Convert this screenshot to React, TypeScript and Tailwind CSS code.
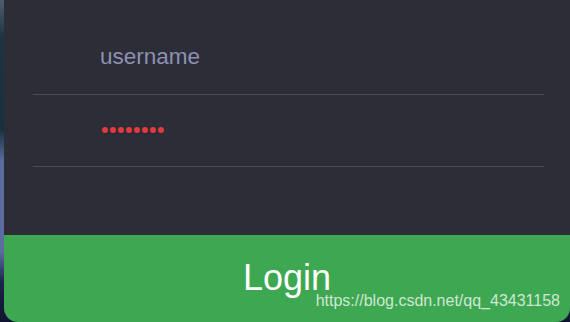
export default function App() {
  return (
    <div className="relative flex h-[322px] w-[570px] overflow-hidden bg-[linear-gradient(180deg,#4d5d6e_0%,#1d3340_12%,#18303c_40%,#5a6b9e_50%,#5c6ca0_78%,#1a2448_88%,#0f1530_100%)] font-['Liberation_Sans',Arial,sans-serif]">
      <div className="ml-[4px] flex flex-1 flex-col bg-[#2d2d38] rounded-b-[14px] overflow-hidden">
        <div className="flex flex-1 flex-col pt-[22px]">
          <div className="ml-[29px] mr-[26px] flex h-[73px] items-center border-b border-[#4a4a56] pl-[67px] pb-[2px]">
            <span className="text-[22.5px] leading-none text-[#8c91b2]">username</span>
          </div>
          <div className="ml-[29px] mr-[26px] flex h-[72px] items-center border-b border-[#4a4a56] pl-[69px] pb-[2px]">
            <div className="flex gap-[2px]">
              {Array.from({ length: 8 }).map((_, i) => (
                <span key={i} className="h-[6px] w-[6px] rounded-full bg-[#e23a3e]" />
              ))}
            </div>
          </div>
        </div>
        <button className="flex h-[87px] w-full items-center justify-center bg-[#3ea752] pb-[2px] text-[36px] leading-none text-white">
          Login
        </button>
      </div>
      <span className="absolute right-[10px] bottom-[13px] text-[16px] leading-none text-white/75">
        https://blog.csdn.net/qq_43431158
      </span>
    </div>
  );
}
